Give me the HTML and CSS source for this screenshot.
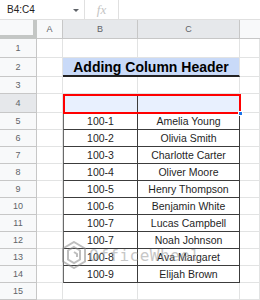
FILE: index.html
```html
<!DOCTYPE html>
<html>
<head>
    <title>Adding Column Header</title>
    <link rel="stylesheet" href="styles.css">
</head>
<body>
    <div class="formula-bar">
        <div class="name-box">B4:C4<span class="caret"></span></div>
        <div class="fx">fx</div>
    </div>
    <div class="sheet">
        <div class="corner"></div><div class="ch">A</div><div class="ch on">B</div><div class="ch on">C</div><div class="ch last"></div>

        <div class="rh">1</div><div class="c"></div><div class="c"></div><div class="c"></div><div class="c"></div>
        <div class="rh">2</div><div class="c"></div><div class="title">Adding Column Header</div><div class="c"></div>
        <div class="rh">3</div><div class="c"></div><div class="c"></div><div class="c"></div><div class="c"></div>
        <div class="rh on">4</div><div class="c"></div><div class="c t b sel"></div><div class="c t sel"></div><div class="c"></div>
        <div class="rh">5</div><div class="c"></div><div class="c t b">100-1</div><div class="c t">Amelia Young</div><div class="c"></div>
        <div class="rh">6</div><div class="c"></div><div class="c t b">100-2</div><div class="c t">Olivia Smith</div><div class="c"></div>
        <div class="rh">7</div><div class="c"></div><div class="c t b">100-3</div><div class="c t">Charlotte Carter</div><div class="c"></div>
        <div class="rh">8</div><div class="c"></div><div class="c t b">100-4</div><div class="c t">Oliver Moore</div><div class="c"></div>
        <div class="rh">9</div><div class="c"></div><div class="c t b">100-5</div><div class="c t">Henry Thompson</div><div class="c"></div>
        <div class="rh">10</div><div class="c"></div><div class="c t b">100-6</div><div class="c t">Benjamin White</div><div class="c"></div>
        <div class="rh">11</div><div class="c"></div><div class="c t b">100-7</div><div class="c t">Lucas Campbell</div><div class="c"></div>
        <div class="rh">12</div><div class="c"></div><div class="c t b">100-7</div><div class="c t">Noah Johnson</div><div class="c"></div>
        <div class="rh">13</div><div class="c"></div><div class="c t b">100-8</div><div class="c t">Ava Margaret</div><div class="c"></div>
        <div class="rh">14</div><div class="c"></div><div class="c t b">100-9</div><div class="c t">Elijah Brown</div><div class="c"></div>
        <div class="rh">15</div><div class="c"></div><div class="c"></div><div class="c"></div><div class="c"></div>

        <div class="selbox"><span class="handle"></span></div>
        <div class="watermark">
            <svg width="24" height="28" viewBox="0 0 24 28">
                <path d="M12 1 L23 7.5 V20.5 L12 27 L1 20.5 V7.5 Z" fill="none" stroke="#8a8a8a" stroke-width="2"/>
                <path d="M12 6 L18 9.5 V18.5 L12 22 L6 18.5 V9.5 Z" fill="none" stroke="#8a8a8a" stroke-width="2"/>
                <path d="M12 11 L15 13 V16" fill="none" stroke="#8a8a8a" stroke-width="2"/>
            </svg>
            <span>OfficeWheel</span>
        </div>
    </div>
</body>
</html>
```
FILE: styles.css
```css
* { box-sizing: border-box; }
body { margin: 0; font-family: "Liberation Sans", Arial, sans-serif; background: #fff; width: 260px; height: 300px; overflow: hidden; }

.formula-bar { height: 20px; display: flex; align-items: center; border-bottom: 1px solid #e0e0e0; background: #fff; }
.name-box { width: 85px; height: 100%; display: flex; align-items: center; padding-left: 7px; font-size: 10px; color: #222; border-right: 1px solid #e0e0e0; position: relative; }
.caret { position: absolute; left: 73px; top: 9px; border-left: 3px solid transparent; border-right: 3px solid transparent; border-top: 3px solid #5f6368; }
.fx { width: 34px; height: 100%; display: flex; align-items: center; justify-content: center; font-family: "Liberation Serif", serif; font-style: italic; font-size: 13px; color: #c4c4c4; border-right: 1px solid #e0e0e0; }

.sheet { position: relative; display: grid; grid-template-columns: 37px 26px 75px 102px 1fr; grid-template-rows: 19px 19px 19px 17px 19px repeat(11, 17px); }
.corner { background: #f8f9fa; border-right: 4px solid #c4c7c5; border-bottom: 4px solid #c4c7c5; }
.ch { background: #f8f9fa; border-right: 1px solid #c7c7c7; border-bottom: 1px solid #c7c7c7; font-size: 9px; color: #5f6368; display: flex; align-items: center; justify-content: center; }
.ch.on { background: #e6e8eb; }
.ch.last { border-right: none; }
.rh { background: #f8f9fa; border-right: 1px solid #c7c7c7; border-bottom: 1px solid #c7c7c7; font-size: 9px; color: #5f6368; display: flex; align-items: center; justify-content: center; }
.rh.on { background: #e6e8eb; }
.c { border-right: 1px solid #e2e3e3; border-bottom: 1px solid #e2e3e3; font-size: 10.5px; color: #1f1f1f; display: flex; align-items: center; justify-content: center; white-space: nowrap; }
.c.t { border-right: 1px solid #3c3c3c; border-bottom: 1px solid #3c3c3c; }
.c.b { border-left: 1px solid #6a6a6a; }
.c.sel { background: #e8f0fe; }

.title { grid-column: span 2; background: #c9daf8; border-bottom: 2px solid #222; border-right: 1px solid #e2e3e3; font-size: 14px; font-weight: bold; color: #000; display: flex; align-items: center; justify-content: center; }

.selbox { position: absolute; grid-row: 5 / 6; grid-column: 3 / 5; inset: 0 -1px -1px 0; border: 2px solid #ff0000; }
.handle { position: absolute; right: -4px; bottom: -4px; width: 5px; height: 5px; background: #1a73e8; border: 1px solid #fff; }

.watermark { position: absolute; left: 62px; top: 221px; display: flex; align-items: center; gap: 3px; opacity: 0.55; }
.watermark span { font-family: "DejaVu Sans Mono", monospace; font-size: 16px; color: #9a9a9a; letter-spacing: 0.5px; }
```
